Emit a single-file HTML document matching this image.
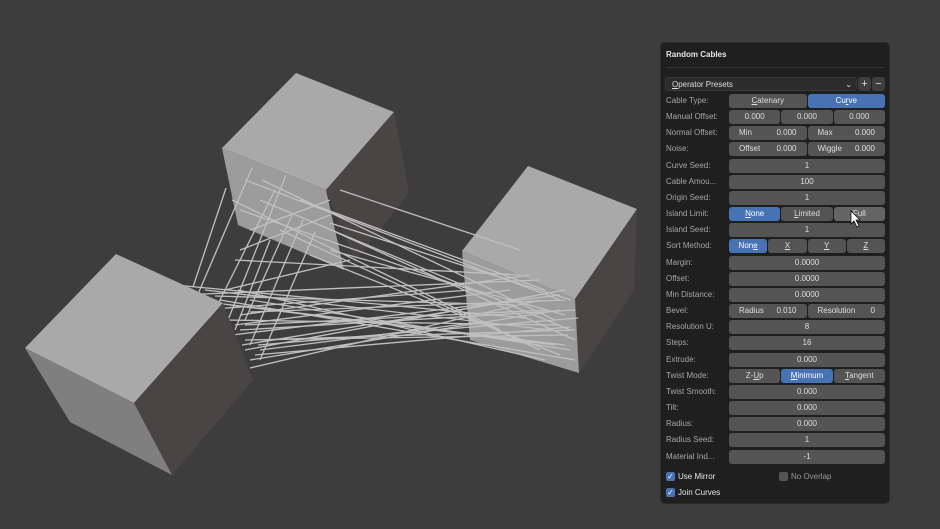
<!DOCTYPE html>
<html><head><meta charset="utf-8">
<style>
*{margin:0;padding:0;box-sizing:border-box}
body{width:940px;height:529px;background:#3d3d3d;overflow:hidden;position:relative;font-family:"Liberation Sans",sans-serif}
svg{position:absolute;left:0;top:0}
#p{position:absolute;left:660px;top:42px;width:230px;height:462px;background:#1f1f1f;border-radius:5px;border:1px solid #2a2a2a}
.a{position:absolute;font-size:8px;line-height:14px;white-space:nowrap}
.l{color:#a6a6a6;left:5px}
.f{position:absolute;height:14px;background:#545454;border-radius:3px;color:#dedede;font-size:8px;line-height:14px;text-align:center;white-space:nowrap;overflow:hidden}
.s{background:#4772b3;color:#fff}
.row{position:absolute;left:68px;width:156px;height:14px;display:flex;gap:1px}
.row .f{position:relative;flex:1}
.sp{display:flex;justify-content:space-between;padding:0 10px}
.cb{position:absolute;width:9px;height:9px;border-radius:2px;background:#4772b3;color:#fff;font-size:8px;line-height:9px;text-align:center}
</style></head><body>
<svg width="940" height="529">
<polygon points="222,148 296,73 394,112 326,190" fill="#a9a9a9"/>
<polygon points="394,112 409,192 355,262 326,190" fill="#4a4545"/>
<polygon points="222,148 326,190 344,270 238,225" fill="#9c9c9c"/>
<polygon points="462,251 528,166 637,209 575,299" fill="#a9a9a9"/>
<polygon points="637,209 634,290 579,373 575,299" fill="#4a4545"/>
<polygon points="462,251 575,299 579,373 470,340" fill="#9c9c9c"/>
<g stroke="#c0c0c0" stroke-width="1.3" fill="none">
<line x1="226" y1="188" x2="193" y2="287"/><line x1="252" y1="168" x2="195" y2="301"/>
<line x1="275" y1="190" x2="205" y2="330"/><line x1="286" y1="175" x2="228" y2="320"/>
<line x1="303" y1="220" x2="250" y2="345"/><line x1="315" y1="232" x2="260" y2="360"/>
<line x1="245" y1="180" x2="560" y2="300"/><line x1="260" y1="200" x2="570" y2="330"/>
<line x1="300" y1="200" x2="545" y2="290"/><line x1="320" y1="225" x2="575" y2="340"/>
<line x1="280" y1="230" x2="540" y2="350"/><line x1="330" y1="250" x2="565" y2="315"/>
<line x1="240" y1="210" x2="500" y2="300"/><line x1="235" y1="260" x2="520" y2="275"/>
<line x1="330" y1="223" x2="571" y2="300"/><line x1="310" y1="255" x2="560" y2="355"/>
<line x1="250" y1="230" x2="330" y2="200"/><line x1="240" y1="250" x2="330" y2="215"/>
<line x1="180" y1="295" x2="540" y2="280"/><line x1="175" y1="285" x2="525" y2="318"/>
<line x1="190" y1="300" x2="565" y2="345"/><line x1="205" y1="290" x2="550" y2="330"/>
<line x1="225" y1="320" x2="560" y2="325"/><line x1="240" y1="330" x2="575" y2="310"/>
<line x1="245" y1="350" x2="565" y2="290"/><line x1="250" y1="360" x2="560" y2="310"/>
<line x1="250" y1="368" x2="540" y2="300"/><line x1="245" y1="340" x2="568" y2="335"/>
<line x1="230" y1="305" x2="555" y2="345"/><line x1="240" y1="315" x2="530" y2="275"/>
<line x1="255" y1="355" x2="570" y2="327"/><line x1="242" y1="345" x2="520" y2="300"/>
<line x1="220" y1="300" x2="575" y2="360"/><line x1="235" y1="325" x2="510" y2="290"/>
<line x1="250" y1="312" x2="565" y2="300"/><line x1="200" y1="310" x2="470" y2="290"/>
<line x1="255" y1="340" x2="575" y2="330"/><line x1="260" y1="350" x2="480" y2="322"/>
<line x1="340" y1="190" x2="520" y2="250"/><line x1="225" y1="290" x2="350" y2="260"/>
<line x1="232" y1="200" x2="500" y2="330"/><line x1="262" y1="180" x2="555" y2="320"/>
<line x1="245" y1="325" x2="548" y2="310"/><line x1="232" y1="335" x2="560" y2="295"/>
<line x1="250" y1="300" x2="570" y2="350"/><line x1="238" y1="290" x2="545" y2="360"/>
<line x1="270" y1="240" x2="235" y2="330"/><line x1="292" y1="215" x2="245" y2="320"/>
<line x1="258" y1="345" x2="578" y2="318"/><line x1="215" y1="296" x2="515" y2="305"/>
</g>
<polygon points="25,348 116,254 223,303 134,403" fill="#a9a9a9"/>
<polygon points="223,303 253,380 172,475 134,403" fill="#4a4545"/>
<polygon points="25,348 134,403 172,475 70,422" fill="#7f7f7f"/>
</svg>
<div id="p">
<div class="a" style="left:5px;top:5px;color:#e6e6e6;font-weight:bold">Random Cables</div>
<div style="position:absolute;left:5px;right:5px;top:24px;height:1px;background:#333"></div>
<div class="f" style="left:4px;top:34px;width:192px;background:#2c2c2c;text-align:left;padding-left:6px;border:1px solid #3a3a3a"><u>O</u>perator Presets<span style="position:absolute;right:4px">⌄</span></div>
<div class="f" style="left:197px;top:34px;width:13px;background:#3e3e3e;font-size:11px">+</div>
<div class="f" style="left:211px;top:34px;width:13px;background:#3e3e3e;font-size:11px">−</div>
<div class="a l" style="top:51px">Cable Type:</div><div class="row" style="top:51px"><div class="f"><u>C</u>atenary</div><div class="f s">Cu<u>r</u>ve</div></div>
<div class="a l" style="top:67px">Manual Offset:</div><div class="row" style="top:67px"><div class="f">0.000</div><div class="f">0.000</div><div class="f">0.000</div></div>
<div class="a l" style="top:83px">Normal Offset:</div><div class="row" style="top:83px"><div class="f sp"><span>Min</span><span>0.000</span></div><div class="f sp"><span>Max</span><span>0.000</span></div></div>
<div class="a l" style="top:99px">Noise:</div><div class="row" style="top:99px"><div class="f sp"><span>Offset</span><span>0.000</span></div><div class="f sp"><span>Wiggle</span><span>0.000</span></div></div>
<div class="a l" style="top:116px">Curve Seed:</div><div class="row" style="top:116px"><div class="f">1</div></div>
<div class="a l" style="top:132px">Cable Amou...</div><div class="row" style="top:132px"><div class="f">100</div></div>
<div class="a l" style="top:148px">Origin Seed:</div><div class="row" style="top:148px"><div class="f">1</div></div>
<div class="a l" style="top:164px">Island Limit:</div><div class="row" style="top:164px"><div class="f s"><u>N</u>one</div><div class="f"><u>L</u>imited</div><div class="f" style="background:#656565"><u>F</u>ull</div></div>
<div class="a l" style="top:180px">Island Seed:</div><div class="row" style="top:180px"><div class="f">1</div></div>
<div class="a l" style="top:196px">Sort Method:</div><div class="row" style="top:196px"><div class="f s">Non<u>e</u></div><div class="f"><u>X</u></div><div class="f"><u>Y</u></div><div class="f"><u>Z</u></div></div>
<div class="a l" style="top:213px">Margin:</div><div class="row" style="top:213px"><div class="f">0.0000</div></div>
<div class="a l" style="top:229px">Offset:</div><div class="row" style="top:229px"><div class="f">0.0000</div></div>
<div class="a l" style="top:245px">Min Distance:</div><div class="row" style="top:245px"><div class="f">0.0000</div></div>
<div class="a l" style="top:261px">Bevel:</div><div class="row" style="top:261px"><div class="f sp"><span>Radius</span><span>0.010</span></div><div class="f sp"><span>Resolution</span><span>0</span></div></div>
<div class="a l" style="top:277px">Resolution U:</div><div class="row" style="top:277px"><div class="f">8</div></div>
<div class="a l" style="top:293px">Steps:</div><div class="row" style="top:293px"><div class="f">16</div></div>
<div class="a l" style="top:310px">Extrude:</div><div class="row" style="top:310px"><div class="f">0.000</div></div>
<div class="a l" style="top:326px">Twist Mode:</div><div class="row" style="top:326px"><div class="f">Z-<u>U</u>p</div><div class="f s"><u>M</u>inimum</div><div class="f"><u>T</u>angent</div></div>
<div class="a l" style="top:342px">Twist Smooth:</div><div class="row" style="top:342px"><div class="f">0.000</div></div>
<div class="a l" style="top:358px">Tilt:</div><div class="row" style="top:358px"><div class="f">0.000</div></div>
<div class="a l" style="top:374px">Radius:</div><div class="row" style="top:374px"><div class="f">0.000</div></div>
<div class="a l" style="top:390px">Radius Seed:</div><div class="row" style="top:390px"><div class="f">1</div></div>
<div class="a l" style="top:407px">Material Ind...</div><div class="row" style="top:407px"><div class="f">-1</div></div>
<div class="cb" style="left:5px;top:429px">✓</div><div class="a" style="left:17px;top:427px;color:#e6e6e6">Use Mirror</div>
<div class="cb" style="left:118px;top:429px;background:#545454"></div><div class="a" style="left:130px;top:427px;color:#9a9a9a">No Overlap</div>
<div class="cb" style="left:5px;top:445px">✓</div><div class="a" style="left:17px;top:443px;color:#e6e6e6">Join Curves</div>
</div>
<svg width="940" height="529" style="pointer-events:none"><path d="M851,211 L851,224 L854,221 L857,227 L859,226 L856,220 L860,220 Z" fill="#fff" stroke="#000" stroke-width="0.7"/></svg>
</body></html>
